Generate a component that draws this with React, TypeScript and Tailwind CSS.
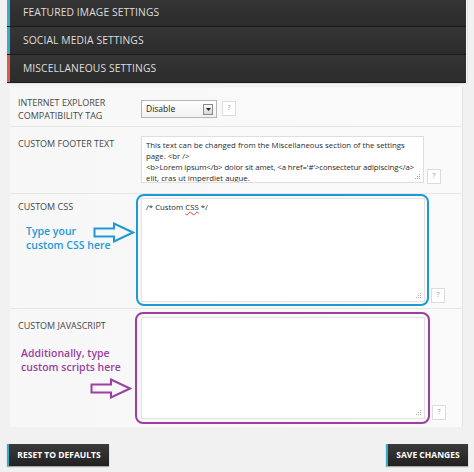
import type { ReactNode } from 'react'

const font = { fontFamily: '"Open Sans", "Liberation Sans", sans-serif' }

function Grip() {
  return (
    <svg width="7" height="7" viewBox="0 0 7 7" className="absolute right-[2px] bottom-[2px]">
      <rect x="5" y="1" width="1" height="1" fill="#aaa" />
      <rect x="3" y="3" width="1" height="1" fill="#aaa" />
      <rect x="5" y="3" width="1" height="1" fill="#aaa" />
      <rect x="1" y="5" width="1" height="1" fill="#aaa" />
      <rect x="3" y="5" width="1" height="1" fill="#aaa" />
      <rect x="5" y="5" width="1" height="1" fill="#aaa" />
    </svg>
  )
}

function Help({ className = '' }: { className?: string }) {
  return (
    <div
      className={`flex items-center justify-center w-[14px] h-[15px] bg-white border border-[#dcdcdc] text-[7px] text-[#999] ${className}`}
    >
      ?
    </div>
  )
}

function Arrow({ color }: { color: string }) {
  return (
    <svg width="42" height="21" viewBox="0 0 42 21">
      <path
        d="M1.5 6.5 H21 V1.5 L40 10.5 L21 19.5 V14.5 H1.5 Z"
        fill="none"
        stroke={color}
        strokeWidth="2"
        strokeLinejoin="miter"
      />
    </svg>
  )
}

function SectionBar({ title, stripe }: { title: string; stripe: string }) {
  return (
    <div className="flex h-[28px] border-b border-[#1b1b1b] bg-gradient-to-b from-[#353535] to-[#2c2c2c]">
      <div className={`w-[3px] ${stripe}`} />
      <div className="flex items-center pl-[13px] text-[10.3px] text-[#dedede] tracking-[0.1px]">{title}</div>
    </div>
  )
}

function Row({ label, children, className }: { label: ReactNode; children: ReactNode; className: string }) {
  return (
    <div className={`flex border-b border-[#e6e6e6] ${className}`}>
      <div className="w-[126px] shrink-0 pl-[8px]">{label}</div>
      <div className="flex-1 relative">{children}</div>
    </div>
  )
}

export default function App() {
  return (
    <div className="w-[474px] h-[472px] bg-[#f1f1f1] overflow-hidden" style={font}>
      {/* Section bars */}
      <div className="ml-[7px] w-[460px] -mt-[1px] border-r border-[#fafafa] shadow-[1px_1px_0_#e2e2e2]">
        <SectionBar title="FEATURED IMAGE SETTINGS" stripe="bg-[#36abc8]" />
        <SectionBar title="SOCIAL MEDIA SETTINGS" stripe="bg-[#36abc8]" />
        <SectionBar title="MISCELLANEOUS SETTINGS" stripe="bg-[#df5b48]" />
      </div>

      {/* Settings panel */}
      <div className="mt-[4px] ml-[10px] w-[453px] bg-gradient-to-r from-[#f7f7f7] to-[#fafafa] border-r border-[#e4e4e4] text-[#474747]">
        <Row
          className="h-[40px]"
          label={
            <div className="pt-[9px] text-[9px] leading-[13px]">
              INTERNET EXPLORER
              <br />
              COMPATIBILITY TAG
            </div>
          }
        >
          <div className="flex items-start gap-[5px] pt-[13px] pl-[5px]">
            <div className="flex items-center justify-between w-[76px] h-[18px] border border-[#b5b5b5] bg-gradient-to-b from-white to-[#f1f1f1] pl-[4px] pr-[3px]">
              <span className="text-[8.5px] text-[#222]">Disable</span>
              <div className="flex items-center justify-center w-[10px] h-[11px] border border-[#8a8a8a] bg-gradient-to-b from-[#fafafa] to-[#d8d8d8]">
                <svg width="5" height="3" viewBox="0 0 5 3">
                  <path d="M0 0 H5 L2.5 3 Z" fill="#222" />
                </svg>
              </div>
            </div>
            <Help className="mt-[1px]" />
          </div>
        </Row>

        <Row
          className="h-[67px]"
          label={<div className="pt-[10px] text-[9px] leading-[13px]">CUSTOM FOOTER TEXT</div>}
        >
          <div className="flex items-end gap-[3px] pt-[9px] pl-[5px]">
            <div className="relative w-[283px] h-[47px] bg-white border border-[#dedede] px-[4px] pt-[3px] text-[7.8px] leading-[11px] text-[#2a2a2a] whitespace-nowrap overflow-hidden">
              <div>This text can be changed from the Miscellaneous section of the settings</div>
              <div>page. &lt;br /&gt;</div>
              <div className="tracking-[-0.1px]">
                &lt;b&gt;Lorem ipsum&lt;/b&gt; dolor sit amet, &lt;a href='#'&gt;consectetur adipiscing&lt;/a&gt;
              </div>
              <div>elit, cras ut imperdiet augue.</div>
              <Grip />
            </div>
            <Help className="mb-[-1px] w-[13px] h-[13px]" />
          </div>
        </Row>

        <Row
          className="h-[115px]"
          label={
            <div>
              <div className="pt-[6px] text-[9px] leading-[13px]">CUSTOM CSS</div>
              <div className="flex items-center mt-[11px] pl-[8px]">
                <div className="text-[10.5px] leading-[14px] font-semibold text-[#1d9ad6] w-[85px]">
                  Type your
                  <br />
                  custom CSS here
                </div>
              </div>
              <div className="-mt-[30px] ml-[75px]">
                <Arrow color="#1d9ad6" />
              </div>
            </div>
          }
        >
          <div className="flex items-end gap-[2px] pl-0">
            <div className="w-[293px] h-[112px] border-2 border-[#1d9ad6] rounded-[8px] p-[2px] pl-[3px]">
              <div className="relative w-full h-full bg-white border border-[#e2e2e2] px-[4px] pt-[3px] text-[7.8px] leading-[11px] text-[#2a2a2a]">
                /* Custom{' '}
                <span className="underline decoration-wavy decoration-[#e04040] decoration-[0.5px]">CSS</span> */
                <Grip />
              </div>
            </div>
            <Help className="mb-[3px] w-[12px] h-[15px]" />
          </div>
        </Row>

        <div className="flex h-[118px]">
          <div className="w-[125px] shrink-0 pl-[8px]">
            <div className="pt-[10px] text-[9px] leading-[13px]">CUSTOM JAVASCRIPT</div>
            <div className="mt-[14px] pl-[3px] text-[10.5px] leading-[14px] font-semibold text-[#9b3fa3]">
              Additionally, type
              <br />
              custom scripts here
            </div>
            <div className="mt-[4px] ml-[72px]">
              <Arrow color="#9b3fa3" />
            </div>
          </div>
          <div className="flex items-end gap-[2px] pt-[3px] h-[115px]">
            <div className="w-[295px] h-[112px] border-2 border-[#9b3fa3] rounded-[8px] p-[3px] pl-[4px]">
              <div className="relative w-full h-full bg-white border border-[#e2e2e2]">
                <Grip />
              </div>
            </div>
            <Help className="mb-[4px] w-[11px] h-[12px]" />
          </div>
        </div>
      </div>

      {/* Buttons */}
      <div className="flex justify-between mt-[17px] pl-[7px] pr-[6px]">
        <button className="flex h-[22px] w-[102px] bg-gradient-to-b from-[#3a3a3a] to-[#222] shadow-[0_1px_1px_rgba(0,0,0,0.3)]">
          <span className="w-[2px] h-full bg-[#36abc8]" />
          <span className="flex-1 flex items-center justify-center text-[8.5px] font-bold text-white">
            RESET TO DEFAULTS
          </span>
        </button>
        <button className="flex h-[22px] w-[82px] bg-gradient-to-b from-[#3a3a3a] to-[#222] shadow-[0_1px_1px_rgba(0,0,0,0.3)]">
          <span className="w-[2px] h-full bg-[#36abc8]" />
          <span className="flex-1 flex items-center justify-center text-[8.5px] font-bold text-white">
            SAVE CHANGES
          </span>
        </button>
      </div>
    </div>
  )
}
